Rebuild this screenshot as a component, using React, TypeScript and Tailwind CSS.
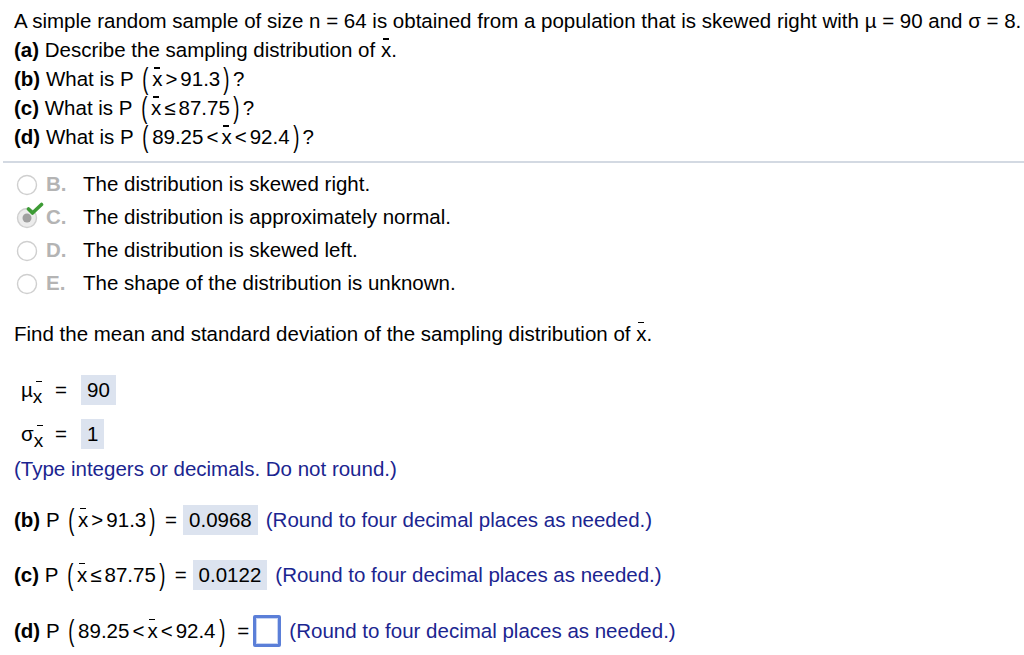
import React from "react";

const XBar = () => (
  <span className="relative inline-block">
    x
    <span className="absolute left-[2px] top-[3px] h-[1.5px] w-[6px] bg-black" />
  </span>
);

const SubXBar = () => (
  <span className="relative inline-block translate-y-[8px] text-[19px]">
    x
    <span className="absolute left-[3px] top-[-2px] h-[1.5px] w-[6px] bg-black" />
  </span>
);

const LP = () => <span className="inline-block scale-y-[1.4] scale-x-[0.9] mx-[3px]">(</span>;
const RP = () => <span className="inline-block scale-y-[1.4] scale-x-[0.9] mx-[3px]">)</span>;

const Op = ({ c }: { c: string }) => <span className="mx-[3px]">{c}</span>;

const Radio = ({ checked }: { checked?: boolean }) => (
  <span className="relative inline-block w-[22px] h-[22px]">
    <svg width="22" height="22" viewBox="0 0 22 22" className="absolute left-0 top-0">
      <circle cx="11" cy="11" r="9.5" fill={checked ? "#ececec" : "#fff"} stroke="#cfcfcf" strokeWidth="1.4" />
      {checked && <circle cx="11" cy="11" r="4.5" fill="#a0a0a0" />}
    </svg>
    {checked && (
      <svg width="18" height="14" viewBox="0 0 18 14" className="absolute left-[10px] top-[-5px]">
        <path d="M2.5 7 L6.5 11 L15.5 2.5" fill="none" stroke="#3d9b35" strokeWidth="3.6" strokeLinecap="round" strokeLinejoin="round" />
      </svg>
    )}
  </span>
);

const Option = ({ letter, text, checked }: { letter: string; text: string; checked?: boolean }) => (
  <div className="flex items-center h-[33px]">
    <span className="ml-[2px] flex items-center">
      <Radio checked={checked} />
    </span>
    <span className="ml-[8px] w-[37px] font-bold text-[#b4b4b4]">{letter}.</span>
    <span>{text}</span>
  </div>
);

const Ans = ({ v }: { v: string }) => (
  <span className="inline-flex items-center justify-center h-[30px] px-[6px] bg-[#dce3ef]">{v}</span>
);

const Hint = ({ children }: { children: React.ReactNode }) => (
  <span className="ml-[8px] text-[#1b2590]">{children}</span>
);

export default function App() {
  return (
    <div
      className="w-[1024px] h-[655px] bg-white text-black text-[20.5px] overflow-hidden"
      style={{ fontFamily: '"Liberation Sans", Arial, sans-serif' }}
    >
      <div className="pt-[7px] pl-[14px]">
        <div className="h-[29px] flex items-center whitespace-nowrap">
          A simple random sample of size n = 64 is obtained from a population that is skewed right with µ = 90 and σ = 8.
        </div>
        <div className="h-[29px] flex items-center whitespace-nowrap">
          <span className="font-bold">(a)</span>&nbsp;Describe the sampling distribution of&nbsp;<XBar />.
        </div>
        <div className="h-[29px] flex items-center whitespace-nowrap">
          <span className="font-bold">(b)</span>&nbsp;What is P&nbsp;
          <LP />
          <XBar />
          <Op c=">" />
          91.3
          <RP />?
        </div>
        <div className="h-[29px] flex items-center whitespace-nowrap">
          <span className="font-bold">(c)</span>&nbsp;What is P&nbsp;
          <LP />
          <XBar />
          <Op c="≤" />
          87.75
          <RP />?
        </div>
        <div className="h-[29px] flex items-center whitespace-nowrap">
          <span className="font-bold">(d)</span>&nbsp;What is P&nbsp;
          <LP />
          89.25
          <Op c="<" />
          <XBar />
          <Op c="<" />
          92.4
          <RP />?
        </div>
      </div>

      <div className="mt-[9px] ml-[3px] h-[2px] bg-[#d3d9e2]" />

      <div className="pl-[14px] mt-[5px]">
        <Option letter="B" text="The distribution is skewed right." />
        <Option letter="C" text="The distribution is approximately normal." checked />
        <Option letter="D" text="The distribution is skewed left." />
        <Option letter="E" text="The shape of the distribution is unknown." />

        <div className="mt-[20px] h-[28px] flex items-center">
          Find the mean and standard deviation of the sampling distribution of&nbsp;<XBar />.
        </div>

        <div className="mt-[27px] h-[30px] flex items-center">
          <span className="ml-[7px] inline-flex items-start w-[33px]">
            <span>µ</span>
            <SubXBar />
          </span>
          <span className="ml-[1px] w-[26px]">=</span>
          <Ans v="90" />
        </div>
        <div className="mt-[14px] h-[30px] flex items-center">
          <span className="ml-[7px] inline-flex items-start w-[33px]">
            <span>σ</span>
            <SubXBar />
          </span>
          <span className="ml-[1px] w-[26px]">=</span>
          <Ans v="1" />
        </div>
        <div className="mt-[8px] h-[24px] flex items-center text-[#1b2590]">
          (Type integers or decimals. Do not round.)
        </div>

        <div className="mt-[24px] h-[30px] flex items-center whitespace-nowrap">
          <span className="font-bold">(b)</span>&nbsp;P&nbsp;
          <LP />
          <XBar />
          <Op c=">" />
          91.3
          <RP />
          <span className="mx-[6px]">=</span>
          <Ans v="0.0968" />
          <Hint>(Round to four decimal places as needed.)</Hint>
        </div>
        <div className="mt-[25px] h-[30px] flex items-center whitespace-nowrap">
          <span className="font-bold">(c)</span>&nbsp;P&nbsp;
          <LP />
          <XBar />
          <Op c="≤" />
          87.75
          <RP />
          <span className="mx-[6px]">=</span>
          <Ans v="0.0122" />
          <Hint>(Round to four decimal places as needed.)</Hint>
        </div>
        <div className="mt-[25px] h-[32px] flex items-center whitespace-nowrap">
          <span className="font-bold">(d)</span>&nbsp;P&nbsp;
          <LP />
          89.25
          <Op c="<" />
          <XBar />
          <Op c="<" />
          92.4
          <RP />
          <span className="ml-[9px] mr-[4px]">=</span>
          <span className="inline-block w-[28px] h-[32px] border-[3px] border-[#5b7fd8] rounded-[2px] bg-white shadow-[inset_0_0_0_1px_#c7d4f3]" />
          <Hint>(Round to four decimal places as needed.)</Hint>
        </div>
      </div>
    </div>
  );
}
